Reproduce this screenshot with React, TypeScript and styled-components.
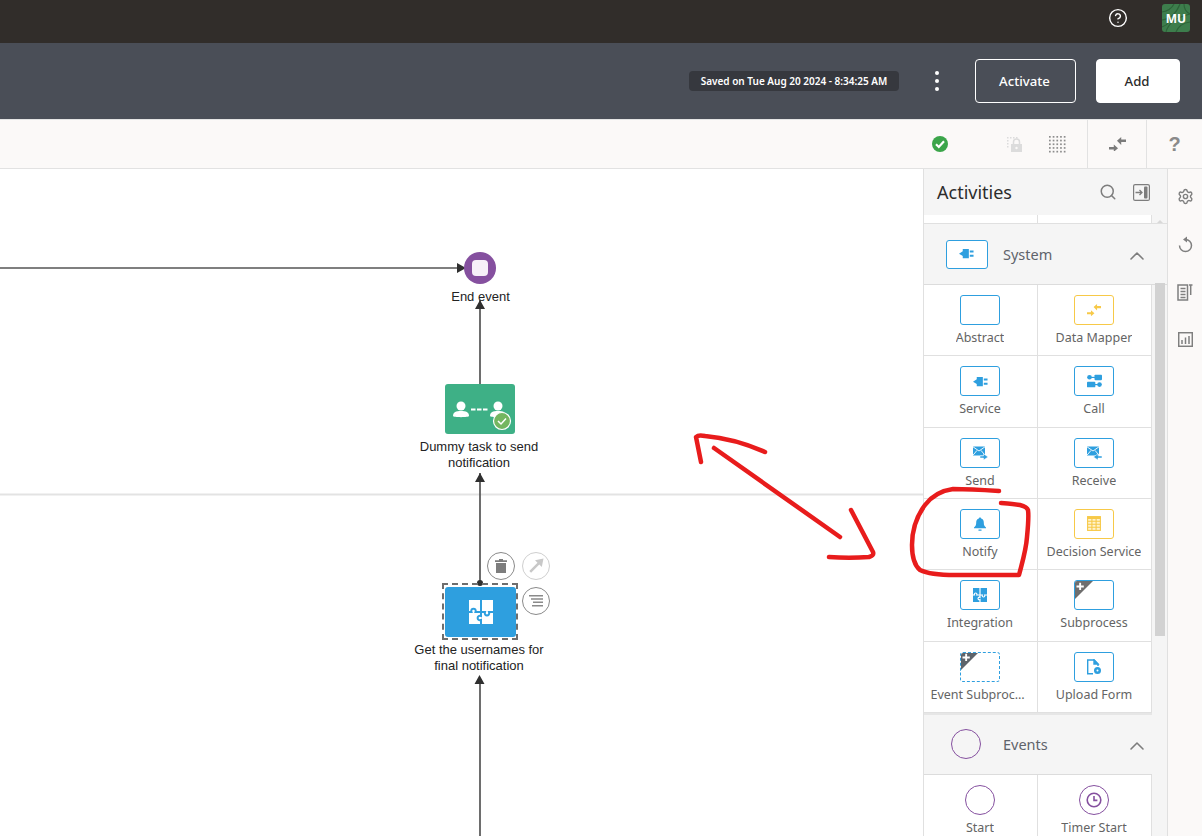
import styled, { createGlobalStyle } from 'styled-components';
import { ReactNode } from 'react';
import { ChevronUp, CircleHelp, Search, Settings } from 'lucide-react';

const GlobalStyle = createGlobalStyle`
  html, body {
    margin: 0;
    height: 100%;
    overflow: hidden;
    background: #fff;
    font-family: 'Noto Sans', 'Open Sans', sans-serif;
  }
  * {
    box-sizing: border-box;
  }
`;

const Page = styled.div`
  position: relative;
  display: flex;
  flex-direction: column;
  width: 1202px;
  height: 836px;
  overflow: hidden;
`;

const TopBar = styled.div`
  display: flex;
  align-items: center;
  justify-content: flex-end;
  height: 43px;
  padding: 0 12px 7px 0;
  gap: 34px;
  background: #312d2a;
  color: #fff;
`;

const Avatar = styled.div`
  position: relative;
  width: 28px;
  height: 28px;
  border-radius: 3px;
  background: #3d7d4c;
  overflow: hidden;
  display: flex;
  align-items: center;
  justify-content: center;
  color: #fff;
  font-size: 12px;
  font-weight: 700;
  span {
    position: relative;
  }
  svg {
    position: absolute;
    inset: 0;
  }
`;

const HeaderBar = styled.div`
  display: flex;
  align-items: center;
  justify-content: flex-end;
  height: 77px;
  padding: 0 22px 1px 0;
  background: #4a4e57;
  border-bottom: 1px solid #e4e4e4;
`;

const SavedPill = styled.div`
  display: flex;
  align-items: center;
  justify-content: center;
  width: 210px;
  height: 20px;
  margin-right: 36px;
  border-radius: 4px;
  background: #36383e;
  color: #fff;
  font-size: 10px;
  font-weight: 600;
  white-space: nowrap;
`;

const Kebab = styled.div`
  display: flex;
  flex-direction: column;
  gap: 4px;
  margin-right: 36px;
  i {
    display: block;
    width: 4px;
    height: 4px;
    border-radius: 50%;
    background: #fff;
  }
`;

const HeaderButton = styled.button<{ $solid?: boolean }>`
  height: 44px;
  width: ${(p) => (p.$solid ? '84px' : '101px')};
  margin-left: ${(p) => (p.$solid ? '20px' : '0')};
  padding: 0 2px 0 0;
  border: 1px solid #fff;
  border-radius: 4px;
  background: ${(p) => (p.$solid ? '#fff' : 'transparent')};
  color: ${(p) => (p.$solid ? '#2b2b2b' : '#fff')};
  font-family: inherit;
  font-size: 13.2px;
  font-weight: 500;
`;

const ToolBar = styled.div`
  display: flex;
  align-items: stretch;
  justify-content: flex-end;
  height: 49px;
  background: #fbf9f8;
  border-bottom: 1px solid #e2e2e2;
`;

const ToolGroup = styled.div`
  display: flex;
  align-items: center;
  padding-right: 21px;
`;

const ToolCell = styled.div`
  display: flex;
  align-items: center;
  justify-content: center;
  width: 59px;
  border-left: 1px solid #e2e2e2;
  color: #7b7b7b;
  &:last-child {
    width: 56px;
  }
`;

const ToolIcon = styled.div<{ $gap?: number }>`
  display: flex;
  margin-left: ${(p) => p.$gap ?? 0}px;
`;

const QuestionMark = styled.span`
  font-family: 'Liberation Sans', sans-serif;
  font-size: 20px;
  font-weight: 700;
  color: #8a8a8a;
`;

const Main = styled.div`
  flex: 1;
  display: flex;
  min-height: 0;
`;

const Canvas = styled.div`
  position: relative;
  width: 923px;
  background: #fff;
`;

const Flow = styled.svg`
  position: absolute;
  inset: 0;
  width: 923px;
  height: 667px;
`;

const Node = styled.div<{ $x: number; $y: number; $w: number; $h: number; $bg?: string; $round?: boolean }>`
  position: absolute;
  left: ${(p) => p.$x}px;
  top: ${(p) => p.$y}px;
  width: ${(p) => p.$w}px;
  height: ${(p) => p.$h}px;
  display: flex;
  align-items: center;
  justify-content: center;
  background: ${(p) => p.$bg ?? 'transparent'};
  border-radius: ${(p) => (p.$round ? '50%' : '3px')};
`;

const Selection = styled.div`
  position: absolute;
  left: 442px;
  top: 414px;
  width: 76px;
  height: 57px;
  border: 2px dashed #6e6e6e;
`;

const NodeLabel = styled.div<{ $x: number; $y: number }>`
  position: absolute;
  left: ${(p) => p.$x - 80}px;
  top: ${(p) => p.$y}px;
  width: 160px;
  text-align: center;
  font-family: 'Liberation Sans', Arial, sans-serif;
  font-size: 13px;
  line-height: 16px;
  color: #232323;
`;

const RoundAction = styled.div<{ $x: number; $y: number; $muted?: boolean }>`
  position: absolute;
  left: ${(p) => p.$x}px;
  top: ${(p) => p.$y}px;
  width: 28px;
  height: 28px;
  display: flex;
  align-items: center;
  justify-content: center;
  border-radius: 50%;
  background: #fff;
  border: 1px solid ${(p) => (p.$muted ? '#cfcfcf' : '#8a8a8a')};
`;

const Panel = styled.div`
  display: flex;
  flex-direction: column;
  width: 245px;
  border-left: 1px solid #e0e0e0;
  border-right: 1px solid #e0e0e0;
  background: #f5f5f5;
`;

const PanelHeader = styled.div`
  display: flex;
  align-items: center;
  gap: 16px;
  height: 46px;
  flex-shrink: 0;
  padding: 0 17px 0 13px;
  color: #7d7d7d;
`;

const PanelTitle = styled.div`
  flex: 1;
  font-size: 18px;
  color: #2c2c2c;
`;

const PanelBody = styled.div`
  flex: 1;
  display: flex;
  min-height: 0;
  overflow: hidden;
`;

const PanelList = styled.div`
  width: 243px;
  flex-shrink: 0;
`;

const Stub = styled.div`
  width: 228px;
  height: 8px;
  background: linear-gradient(to right, #fff 113px, #e0e0e0 113px, #e0e0e0 114px, #fff 114px, #fff 227px, #e0e0e0 227px);
`;

const SectionHead = styled.div`
  display: flex;
  align-items: center;
  height: 62px;
  border-top: 1px solid #e0e0e0;
  border-bottom: 1px solid #dcdcdc;
  color: #7d7d7d;
  svg.chevron {
    margin-top: 4px;
  }
`;

const EventsHead = styled(SectionHead)`
  width: 228px;
  height: 60px;
  border-top: 0;
`;

const SectionIconSlot = styled.div<{ $inset?: number }>`
  display: flex;
  justify-content: center;
  width: 79px;
  flex-shrink: 0;
  padding-left: ${(p) => p.$inset ?? 6}px;
`;

const SectionLabel = styled.div`
  width: 122px;
  font-size: 14.5px;
  color: #5f636b;
`;

const CellGrid = styled.div`
  display: grid;
  grid-template-columns: 114px 114px;
  grid-auto-rows: 71.34px;
  width: 228px;
  background: #fff;
`;

const CellGridBottom = styled(CellGrid)`
  border-bottom: 2px solid #e6e6e6;
`;

const Cell = styled.div`
  display: flex;
  flex-direction: column;
  align-items: center;
  padding: 10px 1px 0 0;
  border-right: 1px solid #e0e0e0;
  border-bottom: 1px solid #e0e0e0;
`;

const CellBox = styled.div<{ $tone?: 'blue' | 'yellow'; $dashed?: boolean }>`
  position: relative;
  display: flex;
  align-items: center;
  justify-content: center;
  width: 40px;
  height: 30px;
  border: 1.5px ${(p) => (p.$dashed ? 'dashed' : 'solid')} ${(p) => (p.$tone === 'yellow' ? '#f7c948' : '#2e9fdf')};
  border-radius: 3px;
  background: #fff;
  overflow: hidden;
`;

const SectionBox = styled(CellBox)`
  width: 42px;
  height: 29px;
`;

const Corner = styled.svg`
  position: absolute;
  left: -1.5px;
  top: -1.5px;
`;

const CellCircle = styled.div`
  display: flex;
  align-items: center;
  justify-content: center;
  width: 30px;
  height: 30px;
  border: 1.5px solid #85509f;
  border-radius: 50%;
  color: #85509f;
`;

const CellLabel = styled.div`
  margin-top: 4px;
  max-width: 99px;
  white-space: nowrap;
  overflow: hidden;
  text-overflow: ellipsis;
  font-size: 12.5px;
  line-height: 17px;
  color: #646464;
`;

const ScrollTrack = styled.div`
  position: relative;
  width: 1px;
  flex-shrink: 0;
`;

const ScrollThumb = styled.div`
  position: absolute;
  left: -12px;
  top: 68px;
  width: 10px;
  height: 353px;
  background: #d2d2d2;
`;

const ScrollArrow = styled.div`
  position: absolute;
  left: -10px;
  top: 5px;
  border-left: 3px solid transparent;
  border-right: 3px solid transparent;
  border-bottom: 3px solid #d8d8d8;
`;

const Rail = styled.div`
  flex: 1;
  display: flex;
  flex-direction: column;
  align-items: center;
  gap: 31px;
  padding: 19px 0 0 0;
  background: #fbf9f8;
  color: #7f7f7f;
`;

const Annotation = styled.svg`
  position: absolute;
  left: 0;
  top: 0;
  pointer-events: none;
`;

const blue = '#2e9fdf';
const amber = '#f7c948';

const Plug = ({ size = 15 }: { size?: number }) => (
  <svg width={size} height={size * 0.75} viewBox="0 0 16 12" fill={blue}>
    <path d="M0 6l4-2.500V1h6.500v10H4V8.500L0 6zM11.500 2.700H15.500v2h-4zM11.500 7.300H15.500v2h-4z" />
  </svg>
);

const Arrows = ({ color, size = 16 }: { color: string; size?: number }) => (
  <svg width={size} height={size * 0.875} viewBox="0 0 16 14" fill={color}>
    <path d="M7.500 3.500L11.500 0v2.400H16v2.400h-4.500V7.500zM8.500 10.500L4.500 7v2.400H0v2.400h4.500v2.200z" />
  </svg>
);

const CallIcon = () => (
  <svg width="15" height="14" viewBox="0 0 18 16" fill={blue}>
    <circle cx="3" cy="3.500" r="2.800" />
    <rect x="9" y="0.500" width="9" height="6.500" rx="1" />
    <rect x="4" y="3" width="6" height="1.400" />
    <rect x="0" y="9" width="10" height="6.500" rx="1" />
    <circle cx="15" cy="12.300" r="2.800" />
    <rect x="9" y="11.600" width="5" height="1.400" />
  </svg>
);

const Mail = ({ incoming }: { incoming?: boolean }) => (
  <svg width="15" height="14" viewBox="0 0 15 14">
    <rect x="0" y="0.500" width="12" height="9" fill={blue} />
    <path d="M0 .8l6 4.200 6-4.200M0 9.200l4-4.800M12 9.200L8 4.400" fill="none" stroke="#fff" strokeWidth=".9" />
    {incoming ? (
      <path d="M15 10v2H11v2L6.500 11 11 7.700V10z" fill={blue} stroke="#fff" strokeWidth=".5" />
    ) : (
      <path d="M7 10v2h3.500v2L15 11l-4.500-3.300V10z" fill={blue} stroke="#fff" strokeWidth=".5" />
    )}
  </svg>
);

const Bell = ({ size = 14 }: { size?: number }) => (
  <svg width={size} height={size} viewBox="0 0 14 14" fill={blue}>
    <path d="M7 0.500c.7 0 1.100.4 1.100 1 1.900.5 2.700 2 2.700 4 0 2.500.6 3.800 2.200 5v.8H1v-.8c1.600-1.200 2.200-2.500 2.200-5 0-2 .8-3.500 2.700-4 0-.6.4-1 1.100-1z" />
    <rect x="5.300" y="12.400" width="3.400" height="1.300" rx=".6" />
  </svg>
);

const Table = () => (
  <svg width="14" height="15" viewBox="0 0 14 15" fill="none" stroke={amber} strokeWidth="1.100">
    <rect x="0.600" y="0.600" width="12.800" height="13.800" fill="#fff3cd" />
    <path d="M.6 1.900h12.800" strokeWidth="2" />
    <path d="M.6 5.300h12.800M.6 8.300h12.800M.6 11.300h12.800M4.900 2v12.400M9.100 2v12.400" />
  </svg>
);

const Puzzle = ({ size = 14, bg, fg, line = 1.5 }: { size?: number; bg: string; fg: string; line?: number }) => (
  <svg width={size} height={size} viewBox="0 0 24 24">
    <rect width="24" height="24" fill={bg} />
    <path
      d="M0 12h2.500c-1.500-4.500 5.500-4.500 4 0H12M12 12h4c-1.500 4.500 5.500 4.500 4 0h4M12 12v4c-4.500-1.500-4.500 5.500 0 4v4M12 0v12"
      fill="none"
      stroke={fg}
      strokeWidth={line}
    />
  </svg>
);

const UploadIcon = () => (
  <svg width="16" height="16" viewBox="0 0 16 16" fill="none" stroke={blue} strokeWidth="1.400">
    <path d="M7 14.800H1.700V1h6.500l3.800 4v2" />
    <path d="M8 1v4h4z" fill={blue} />
    <circle cx="11.500" cy="11.500" r="2.800" fill={blue} />
    <circle cx="11.500" cy="11.500" r="1" fill="#fff" stroke="none" />
  </svg>
);

const SubCorner = ({ dark }: { dark?: boolean }) => (
  <Corner width="20" height="20" viewBox="0 0 20 20">
    <path d="M0 0h20L0 20z" fill={dark ? '#5e646b' : '#6e6e6e'} />
    <path d="M5.200 2.800h1.900v2.700h2.700v1.900H7.100v2.700H5.200V7.400H2.500V5.500h2.700z" fill="#fff" />
  </Corner>
);

const Clock = () => (
  <svg width="16" height="16" viewBox="0 0 16 16" fill="none" stroke="#85509f" strokeWidth="1.600">
    <circle cx="8" cy="8" r="6.800" />
    <path d="M8 4v4.400h3.400" />
  </svg>
);

const UndoIcon = () => (
  <svg width="17" height="17" viewBox="0 0 17 17" fill="none" stroke="#7f7f7f" strokeWidth="1.500">
    <path d="M8.500 3.500A6 6 0 1 1 2.500 9.500" />
    <path d="M10 0.500L6 3.500 10 6.500z" fill="#7f7f7f" stroke="none" />
  </svg>
);

type CellItem = { label: string; tone?: 'blue' | 'yellow'; dashed?: boolean; icon?: ReactNode };

const systemCells: CellItem[] = [
  { label: 'Abstract' },
  { label: 'Data Mapper', tone: 'yellow', icon: <Arrows color={amber} size={14} /> },
  { label: 'Service', icon: <Plug /> },
  { label: 'Call', icon: <CallIcon /> },
  { label: 'Send', icon: <Mail /> },
  { label: 'Receive', icon: <Mail incoming /> },
  { label: 'Notify', icon: <Bell /> },
  { label: 'Decision Service', tone: 'yellow', icon: <Table /> },
  { label: 'Integration', icon: <Puzzle bg={blue} fg="#fff" line={2} /> },
  { label: 'Subprocess', icon: <SubCorner /> },
  { label: 'Event Subprocess', dashed: true, icon: <SubCorner dark /> },
  { label: 'Upload Form', icon: <UploadIcon /> },
];

function App() {
  return (
    <Page>
      <GlobalStyle />
      <TopBar>
        <CircleHelp size={20} strokeWidth={1.7} />
        <Avatar>
          <svg width="28" height="28" viewBox="0 0 28 28" fill="none" stroke="#2d6339" strokeWidth="1.200">
            <path d="M0 8c6-1 10-4 12-8M0 16c8-1 14-6 18-16M4 28c2-8 8-14 24-18M14 28c2-5 6-9 14-10M22 0c0 5 2 8 6 10M0 23c3-1 5-2 7-5" />
          </svg>
          <span>MU</span>
        </Avatar>
      </TopBar>
      <HeaderBar>
        <SavedPill>Saved on Tue Aug 20 2024 - 8:34:25 AM</SavedPill>
        <Kebab>
          <i />
          <i />
          <i />
        </Kebab>
        <HeaderButton>Activate</HeaderButton>
        <HeaderButton $solid>Add</HeaderButton>
      </HeaderBar>
      <ToolBar>
        <ToolGroup>
          <svg width="16" height="16" viewBox="0 0 16 16">
            <circle cx="8" cy="8" r="8" fill="#3ba54a" />
            <path d="M4 8.300l2.800 2.700L12 5.300" fill="none" stroke="#fff" strokeWidth="2.200" />
          </svg>
          <ToolIcon $gap={58}>
            <svg width="16" height="16" viewBox="0 0 16 16" fill="#dcdcdc">
              <path d="M1 1h1.500v1.500H1zM4 1h1.500v1.500H4zM7 1h1.500v1.500H7zM10 1h1.500v1.500H10zM1 4h1.500v1.500H1zM1 7h1.500v1.500H1zM1 10h1.500v1.500H1z" />
              <path d="M5 8h11v8H5z" />
              <path d="M7.500 8V6a3 3 0 0 1 6 0v2" fill="none" stroke="#dcdcdc" strokeWidth="1.500" />
              <circle cx="10.500" cy="12" r="1.200" fill="#fbf9f8" />
            </svg>
          </ToolIcon>
          <ToolIcon $gap={27}>
            <svg width="17" height="17" viewBox="0 0 17 17" fill="#8d8d8d">
              {[0, 1, 2, 3, 4].map((r) =>
                [0, 1, 2, 3, 4].map((c) => <rect key={`${r}-${c}`} x={c * 3.7} y={r * 3.7} width="1.700" height="1.700" />),
              )}
            </svg>
          </ToolIcon>
        </ToolGroup>
        <ToolCell>
          <Arrows color="#7b7b7b" size={17} />
        </ToolCell>
        <ToolCell>
          <QuestionMark>?</QuestionMark>
        </ToolCell>
      </ToolBar>
      <Main>
        <Canvas>
          <Flow viewBox="0 0 923 667">
            <path d="M0 325.500h923" stroke="#e3e3e3" strokeWidth="2" />
            <g stroke="#555" strokeWidth="1.700" fill="none">
              <path d="M0 99h460M480 215v-84M480 414V304M480 667V514" />
            </g>
            <g fill="#2f2f2f">
              <path d="M466 99l-9-5v10zM480 131l-5 9h10zM480 304l-5 9h10zM479.500 506l-5 9h10z" />
              <circle cx="480" cy="414" r="3" />
            </g>
          </Flow>
          <Node $x={464} $y={83} $w={32} $h={32} $bg="#85509f" $round>
            <svg width="16" height="16" viewBox="0 0 16 16">
              <rect width="16" height="16" rx="4" fill="#f6f1f8" />
            </svg>
          </Node>
          <NodeLabel $x={480.5} $y={120}>End event</NodeLabel>
          <Node $x={445} $y={215} $w={70} $h={50} $bg="#3eb086">
            <svg width="70" height="50" viewBox="0 0 70 50">
              <g fill="#fff">
                <circle cx="16" cy="22" r="4.500" />
                <path d="M8 32c0-4 3-5 8-5s8 1 8 5c0 1.500-16 1.500-16 0z" />
                <circle cx="53" cy="22" r="4.500" />
                <path d="M45 32c0-4 3-5 8-5s8 1 8 5c0 1.500-16 1.500-16 0z" />
                <path d="M26 24.500h4.500v2H26zM32 24.500h4.500v2H32zM38 24.500h4.500v2H38z" />
              </g>
              <circle cx="57" cy="37" r="8.500" fill="#74b660" stroke="#fff" strokeWidth="1.200" />
              <path d="M53 37l3 3 5-5.500" fill="none" stroke="#fff" strokeWidth="1.500" />
            </svg>
          </Node>
          <NodeLabel $x={479} $y={270}>
            Dummy task to send
            <br />
            notification
          </NodeLabel>
          <Selection />
          <Node $x={445} $y={418} $w={71} $h={50} $bg="#2e9fdf">
            <Puzzle size={24} bg="#fff" fg="#2e9fdf" line={2} />
          </Node>
          <RoundAction $x={487} $y={383}>
            <svg width="12" height="14" viewBox="0 0 12 14" fill="#7d7d7d">
              <path d="M4 0h4v1.300h4v1.600H0V1.300h4zM1 4h10v10H1z" />
            </svg>
          </RoundAction>
          <RoundAction $x={522} $y={383} $muted>
            <svg width="16" height="16" viewBox="0 0 16 16" fill="#c8c8c8">
              <path d="M15.500 .5L13.800 9l-2.500-2.500-8.200 8.200-1.800-1.800 8.200-8.200L7 2.200z" />
            </svg>
          </RoundAction>
          <RoundAction $x={522} $y={418}>
            <svg width="14" height="12" viewBox="0 0 14 12" fill="#8a8a8a">
              <path d="M0 0h14v1.400H0zM2 3.300h12v1.400H2zM4 6.600h10V8H4zM3 10h11v1.400H3z" />
            </svg>
          </RoundAction>
          <NodeLabel $x={479} $y={473}>
            Get the usernames for
            <br />
            final notification
          </NodeLabel>
        </Canvas>
        <Panel>
          <PanelHeader>
            <PanelTitle>Activities</PanelTitle>
            <Search size={18} strokeWidth={2} />
            <svg width="17" height="17" viewBox="0 0 17 17" fill="none" stroke="#7d7d7d" strokeWidth="1.200">
              <rect x=".6" y=".6" width="15.800" height="15.800" rx="1.500" />
              <rect x="11" y="2.500" width="3.500" height="12" fill="#7d7d7d" stroke="none" rx="1" />
              <path d="M2.500 8.500h6M6.500 6l2.500 2.500L6.500 11" strokeWidth="1.300" />
            </svg>
          </PanelHeader>
          <PanelBody>
            <PanelList>
              <Stub />
              <SectionHead>
                <SectionIconSlot>
                  <SectionBox>
                    <Plug size={15} />
                  </SectionBox>
                </SectionIconSlot>
                <SectionLabel>System</SectionLabel>
                <ChevronUp className="chevron" size={24} strokeWidth={1.6} />
              </SectionHead>
              <CellGridBottom>
                {systemCells.map((c) => (
                  <Cell key={c.label}>
                    <CellBox $tone={c.tone} $dashed={c.dashed}>
                      {c.icon}
                    </CellBox>
                    <CellLabel>{c.label}</CellLabel>
                  </Cell>
                ))}
              </CellGridBottom>
              <EventsHead>
                <SectionIconSlot $inset={4}>
                  <CellCircle />
                </SectionIconSlot>
                <SectionLabel>Events</SectionLabel>
                <ChevronUp className="chevron" size={24} strokeWidth={1.6} />
              </EventsHead>
              <CellGrid>
                <Cell>
                  <CellCircle />
                  <CellLabel>Start</CellLabel>
                </Cell>
                <Cell>
                  <CellCircle>
                    <Clock />
                  </CellCircle>
                  <CellLabel>Timer Start</CellLabel>
                </Cell>
              </CellGrid>
            </PanelList>
            <ScrollTrack>
              <ScrollArrow />
              <ScrollThumb />
            </ScrollTrack>
          </PanelBody>
        </Panel>
        <Rail>
          <Settings size={17} strokeWidth={2} />
          <UndoIcon />
          <svg width="16" height="17" viewBox="0 0 16 17" fill="none" stroke="#7f7f7f" strokeWidth="1.500">
            <path d="M1 1h9.500v15H1zM3.500 4.500h5M3.500 7.500h5M3.500 10.500h5M3.500 13.500h5M12 1h3.500M13.700 1v10" />
          </svg>
          <svg width="15" height="15" viewBox="0 0 15 15" fill="none" stroke="#7f7f7f" strokeWidth="1.500">
            <rect x=".7" y=".7" width="13.600" height="13.600" />
            <path d="M4 12V8M7.500 12V5.500M11 12V4" />
          </svg>
        </Rail>
      </Main>
      <Annotation width="1202" height="836" viewBox="0 0 1202 836" fill="none" stroke="#e81c1c" strokeWidth="4.500" strokeLinecap="round" strokeLinejoin="round">
        <path d="M701 462l-5-25c2-2 5-2 9-1 22 2 42 8 60 16" />
        <path d="M714 448l126 89" />
        <path d="M851 510l22 42c1 3-1 4-4 5-13 1-27 1-40 0" />
        <path d="M999 491c-15-1-32-2-46-2-14 2-22 8-28 16-9 12-13 25-13 40 0 12 2 20 8 25 8 4 20 5 35 5h64c3-12 7-24 8-38 1-10 2-20 1-27-1-3-4-4-8-5-7-1-14-2-19-2" />
      </Annotation>
    </Page>
  );
}

export default App;
